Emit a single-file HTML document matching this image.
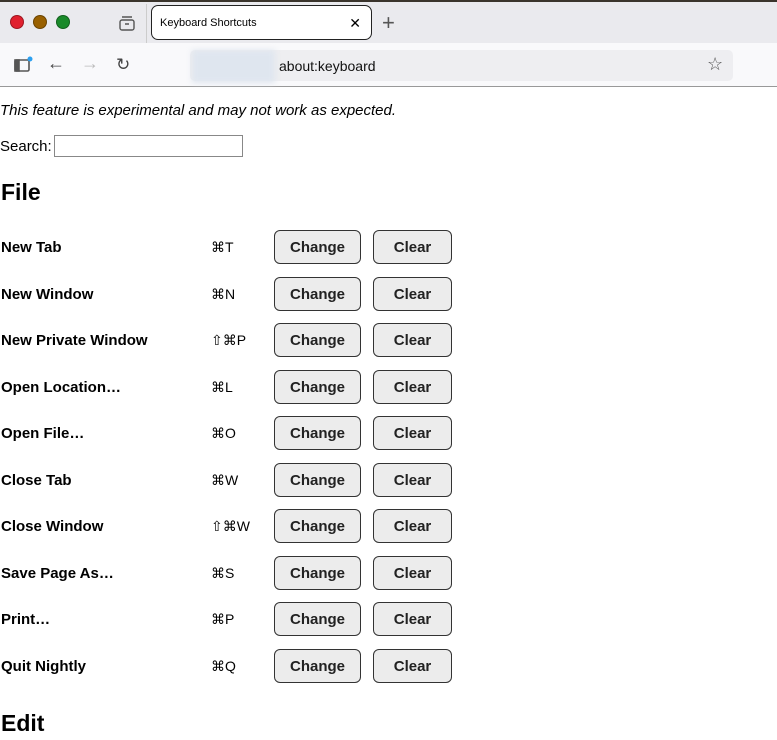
<!DOCTYPE html>
<html><head><style>
body{margin:0;width:777px;height:740px;overflow:hidden;background:#fff;font-family:"Liberation Sans",sans-serif;position:relative}
.a{position:absolute}
.dot{position:absolute;top:15px;width:14px;height:14px;border-radius:50%;box-sizing:border-box;border:1px solid rgba(0,0,0,.3)}
.lbl{position:absolute;left:1px;font-weight:bold;font-size:15px;color:#000}
.key{position:absolute;left:211px;font-size:14px;line-height:17px}
.btn{position:absolute;height:34px;border:1px solid #333;border-radius:6px;background:#ececec;box-sizing:border-box;font-size:15px;font-weight:bold;color:#222;text-align:center;line-height:34px}
</style></head><body>
<div class="a" style="left:0;top:0;width:777px;height:43px;background:#eaeaee"></div>
<div class="a" style="left:0;top:0;width:777px;height:2px;background:#3a342c"></div>
<div class="dot" style="left:10px;background:#e0202e"></div>
<div class="dot" style="left:33px;background:#996000"></div>
<div class="dot" style="left:56px;background:#1a8a2a"></div>
<svg class="a" style="left:118px;top:14px" width="18" height="18" viewBox="0 0 18 18" fill="none" stroke="#555" stroke-width="1.4"><rect x="2" y="6" width="14" height="10" rx="2"/><path d="M4 3h10M7 10h4"/></svg>
<div class="a" style="left:146px;top:4px;width:1px;height:40px;background:#ccc"></div>
<div class="a" style="left:151px;top:5px;width:221px;height:35px;background:#fff;border:1px solid #222;border-radius:7px;box-sizing:border-box;font-size:11px;line-height:35px;padding-left:8px">Keyboard Shortcuts<span style="position:absolute;right:10px;font-size:14px">✕</span></div>
<div class="a" style="left:382px;top:10px;font-size:22px;color:#555;font-weight:200">+</div>
<div class="a" style="left:0;top:43px;width:777px;height:43px;background:#f9f9fb;border-bottom:1px solid #999"></div>
<svg class="a" style="left:14px;top:56px" width="20" height="18" viewBox="0 0 20 18" fill="none" stroke="#555" stroke-width="1.6"><rect x="1" y="4" width="14" height="11" rx="1.5"/><rect x="1" y="4" width="4" height="11" fill="#555"/><circle cx="16" cy="3" r="2.5" fill="#2ca0f0" stroke="none"/></svg>
<div class="a" style="left:47px;top:53px;font-size:18px;color:#444">←</div>
<div class="a" style="left:81px;top:53px;font-size:18px;color:#bbb">→</div>
<div class="a" style="left:116px;top:55px;font-size:17px;color:#444">↻</div>
<div class="a" style="left:190px;top:50px;width:543px;height:31px;background:#eeeef1;border-radius:5px"></div>
<div class="a" style="left:192px;top:50px;width:83px;height:33px;background:#dfe6ef;filter:blur(3px)"></div>
<div class="a" style="left:279px;top:58px;font-size:14px;color:#111">about:keyboard</div>
<div class="a" style="left:707px;top:54px;font-size:18px;color:#555">☆</div>
<div class="a" style="left:0;top:102px;font-size:15px;font-style:italic">This feature is experimental and may not work as expected.</div>
<div class="a" style="left:0;top:138px;font-size:15px">Search:</div>
<div class="a" style="left:54px;top:135px;width:189px;height:22px;border:1px solid #888;box-sizing:border-box"></div>
<div class="a" style="left:1px;top:179px;font-size:23px;font-weight:bold">File</div>
<div class="a" style="left:1px;top:710px;font-size:23px;font-weight:bold">Edit</div>
<div id="rows"></div>
<script>
var r=[["New Tab","⌘T"],["New Window","⌘N"],["New Private Window","⇧⌘P"],["Open Location…","⌘L"],["Open File…","⌘O"],["Close Tab","⌘W"],["Close Window","⇧⌘W"],["Save Page As…","⌘S"],["Print…","⌘P"],["Quit Nightly","⌘Q"]];
var h="";r.forEach(function(x,i){var c=247+i*46.5;
h+='<div class="lbl" style="top:'+(c-8)+'px">'+x[0]+'</div><div class="key" style="top:'+(c-8)+'px">'+x[1]+'</div><div class="btn" style="left:274px;width:87px;top:'+(c-17)+'px">Change</div><div class="btn" style="left:373px;width:79px;top:'+(c-17)+'px">Clear</div>';});
document.getElementById("rows").innerHTML=h;
</script>
</body></html>
